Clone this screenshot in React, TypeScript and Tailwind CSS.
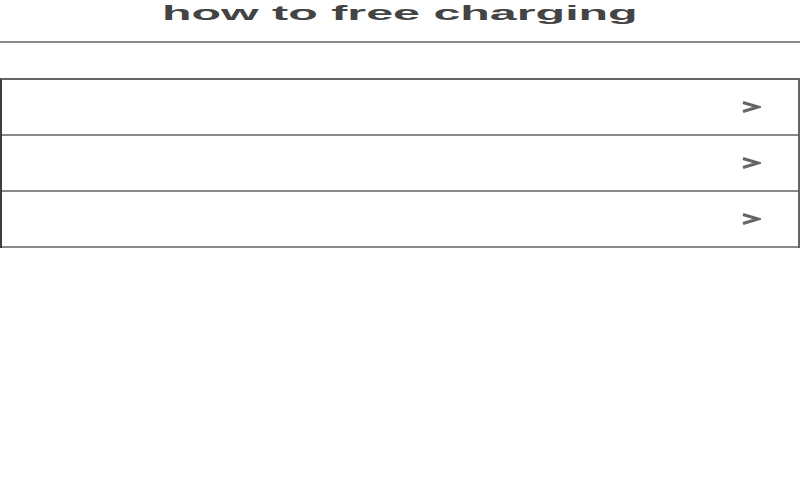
const rows = ['row-1', 'row-2', 'row-3'];

function Chevron() {
  return (
    <svg width="20" height="14" viewBox="0 0 20 14" className="text-[#666]">
      <path d="M2 2.5 L17 7 L2 11.5" fill="none" stroke="currentColor" strokeWidth="3.2" strokeLinejoin="miter" />
    </svg>
  );
}

export default function App() {
  return (
    <div className="h-[480px] w-[800px] bg-white font-['Liberation_Sans',Arial,sans-serif]">
      {/* Header */}
      <header className="flex h-[43px] items-start justify-center border-b-2 border-[#888]">
        <h1 className="mt-[1px] origin-center scale-x-[2.36] text-[20.5px] font-bold leading-[24px] text-[#444]">
          how to free charging
        </h1>
      </header>

      <ul className="mt-[35px] border-t-2 border-l-2 border-r-2 border-t-[#666] border-l-[#3a3f47] border-r-[#666]">
        {rows.map((id) => (
          <li
            key={id}
            className="flex h-[56px] items-center justify-end border-b-2 border-[#8a8a8a] pr-[37px]"
          >
            <Chevron />
          </li>
        ))}
      </ul>
    </div>
  );
}
